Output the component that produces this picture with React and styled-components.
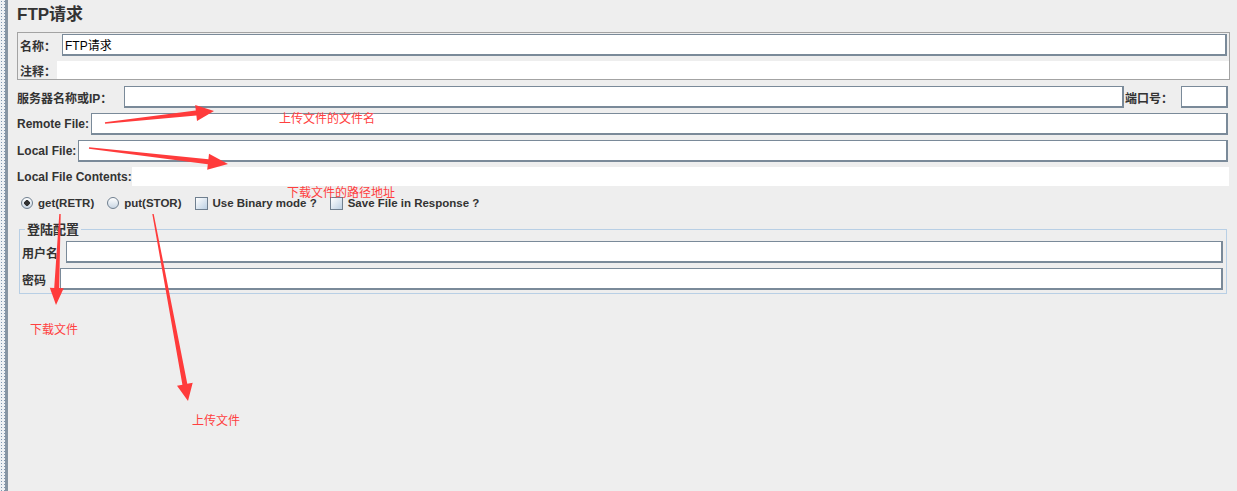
import React from "react";
import styled, { createGlobalStyle } from "styled-components";

const GlobalStyle = createGlobalStyle`
  html, body { margin: 0; padding: 0; }
  body {
    background: #eeeeee;
    font-family: "Liberation Sans", "Noto Sans CJK SC", sans-serif;
    color: #333333;
  }
`;

const red = "#ff3b3b";
const line = "#7a8a99";

function arrowPoints(x1, y1, x2, y2, headLen, headW, neckW, tailW = 1.4) {
    const dx = x2 - x1, dy = y2 - y1;
    const len = Math.hypot(dx, dy);
    const ux = dx / len, uy = dy / len;
    const nx = -uy, ny = ux;
    const bx = x2 - ux * headLen, by = y2 - uy * headLen;
    const p = (x, y, s) => `${(x + nx * s).toFixed(1)},${(y + ny * s).toFixed(1)}`;
    return [
        p(x1, y1, tailW / 2),
        p(bx, by, neckW / 2),
        p(bx, by, headW / 2),
        `${x2},${y2}`,
        p(bx, by, -headW / 2),
        p(bx, by, -neckW / 2),
        p(x1, y1, -tailW / 2),
    ].join(" ");
}

const arrows = [
    [105, 123, 214, 111, 18, 16, 5],
    [89, 148, 228, 164, 20, 16, 5],
    [60, 214, 56, 305, 17, 14, 5],
    [153, 214, 188, 401, 17, 16, 5],
];

const notes = [
    { x: 279, y: 111, text: "上传文件的文件名" },
    { x: 287, y: 185, text: "下载文件的路径地址" },
    { x: 30, y: 322, text: "下载文件" },
    { x: 192, y: 413, text: "上传文件" },
];

export default function App() {
    return (
        <Page>
            <GlobalStyle />
            <DottedEdge />
            <EdgeBar />
            <Main>
                <Title>FTP请求</Title>
                <NamePanel>
                    <PanelRow padRight={2}>
                        <Label width={42}>名称：</Label>
                        <TextInput readOnly value="FTP请求" />
                    </PanelRow>
                    <PanelRow>
                        <Label width={37}>注释：</Label>
                        <PlainArea />
                    </PanelRow>
                </NamePanel>

                <FieldRow first>
                    <Label width={107}>服务器名称或IP：</Label>
                    <TextInput readOnly value="" />
                    <Label width={56} gap={1}>端口号：</Label>
                    <PortInput readOnly value="" />
                </FieldRow>
                <FieldRow>
                    <Label width={74}>Remote File:</Label>
                    <TextInput readOnly value="" />
                </FieldRow>
                <FieldRow>
                    <Label width={61}>Local File:</Label>
                    <TextInput readOnly value="" />
                </FieldRow>
                <ContentsRow>
                    <Label width={115}>Local File Contents:</Label>
                    <PlainArea />
                </ContentsRow>

                <OptionRow>
                    <Option>
                        <Radio checked />
                        get(RETR)
                    </Option>
                    <Option>
                        <Radio />
                        put(STOR)
                    </Option>
                    <Option>
                        <Check />
                        Use Binary mode ?
                    </Option>
                    <Option>
                        <Check />
                        Save File in Response ?
                    </Option>
                </OptionRow>

                <LoginSet>
                    <Legend>登陆配置</Legend>
                    <LoginRow>
                        <Label width={44}>用户名</Label>
                        <TextInput readOnly value="" />
                    </LoginRow>
                    <LoginRow>
                        <Label width={38}>密码</Label>
                        <TextInput readOnly value="" />
                    </LoginRow>
                </LoginSet>
            </Main>

            <Overlay>
                <svg width="1237" height="491" viewBox="0 0 1237 491">
                    {arrows.map((a, i) => (
                        <polygon key={i} points={arrowPoints(...a)} fill={red} />
                    ))}
                </svg>
                {notes.map((n) => (
                    <Note key={n.text} style={{ left: n.x, top: n.y }}>{n.text}</Note>
                ))}
            </Overlay>
        </Page>
    );
}

const Page = styled.div`
    position: relative;
    display: flex;
    height: 100vh;
    min-height: 491px;
    background: #eeeeee;
    overflow: hidden;
`;

const DottedEdge = styled.div`
    width: 5px;
    flex: none;
    background-color: #eef1f4;
    background-image: radial-gradient(circle, #7f97b0 0.7px, transparent 1px);
    background-size: 3px 3px;
    background-position: 0 0;
`;

const EdgeBar = styled.div`
    width: 3px;
    flex: none;
    background: #8795a3;
`;

const Main = styled.div`
    flex: 1;
    display: flex;
    flex-direction: column;
    padding: 4px 7px 0 9px;
    min-width: 0;
`;

const Title = styled.div`
    font-size: 17px;
    font-weight: bold;
    line-height: 22px;
    height: 22px;
    margin-bottom: 6px;
    color: #333;
`;

const NamePanel = styled.div`
    border: 1px solid #a3a3a3;
    display: flex;
    flex-direction: column;
    gap: 5px;
    padding: 1px 0 0 2px;
`;

const PanelRow = styled.div`
    display: flex;
    align-items: center;
    padding-right: ${({ padRight }) => padRight || 0}px;
`;

const Label = styled.span`
    flex: none;
    width: ${({ width }) => width}px;
    margin-left: ${({ gap }) => gap || 0}px;
    font-size: 12px;
    font-weight: bold;
    color: #333;
    white-space: nowrap;
    overflow: visible;
`;

const TextInput = styled.input`
    flex: 1;
    min-width: 0;
    box-sizing: border-box;
    height: 22px;
    margin: 0;
    padding: 0 2px;
    background: #ffffff;
    border: 1px solid ${line};
    border-right-width: 2px;
    border-bottom-width: 2px;
    font-family: "Liberation Sans", "Noto Sans CJK SC", sans-serif;
    font-size: 12px;
    color: #000;
    outline: none;
`;

const PortInput = styled(TextInput)`
    flex: none;
    width: 47px;
`;

const PlainArea = styled.div`
    flex: 1;
    height: 18px;
    background: #ffffff;
`;

const FieldRow = styled.div`
    display: flex;
    align-items: center;
    margin-top: ${({ first }) => (first ? 6 : 5)}px;
    padding-right: 2px;
`;

const ContentsRow = styled.div`
    display: flex;
    align-items: center;
    margin-top: 5px;
    padding-right: 1px;
    ${PlainArea} { height: 19px; }
`;

const OptionRow = styled.div`
    display: flex;
    align-items: center;
    gap: 13px;
    height: 20px;
    margin-top: 7px;
    padding-left: 4px;
`;

const Option = styled.label`
    display: flex;
    align-items: center;
    gap: 5px;
    font-size: 11.5px;
    font-weight: bold;
    color: #333;
    white-space: nowrap;
`;

const Radio = styled.span`
    width: 12px;
    height: 12px;
    box-sizing: border-box;
    border-radius: 50%;
    border: 1px solid #6f7f8f;
    background: ${({ checked }) =>
        checked
            ? "radial-gradient(circle, #333 0 2.6px, transparent 3px), linear-gradient(#ffffff, #c9d6e3)"
            : "linear-gradient(#ffffff, #c9d6e3)"};
`;

const Check = styled.span`
    width: 13px;
    height: 13px;
    box-sizing: border-box;
    border: 1px solid #6f7f8f;
    background: linear-gradient(135deg, #ffffff, #bcd0e3);
`;

const LoginSet = styled.fieldset`
    margin: 9px 3px 0 2px;
    padding: 4px 3px 3px 2px;
    border: 1px solid #b8cfe5;
    display: flex;
    flex-direction: column;
    gap: 5px;
    min-width: 0;
`;

const Legend = styled.legend`
    font-size: 13px;
    font-weight: bold;
    line-height: 15px;
    padding: 0 2px;
    margin-left: 3px;
    color: #333;
`;

const LoginRow = styled.div`
    display: flex;
    align-items: center;
`;

const Overlay = styled.div`
    position: absolute;
    inset: 0;
    pointer-events: none;
    svg { position: absolute; left: 0; top: 0; }
`;

const Note = styled.span`
    position: absolute;
    font-family: "Noto Sans CJK SC", sans-serif;
    font-size: 12px;
    line-height: 14px;
    color: #ff4040;
    white-space: nowrap;
`;
